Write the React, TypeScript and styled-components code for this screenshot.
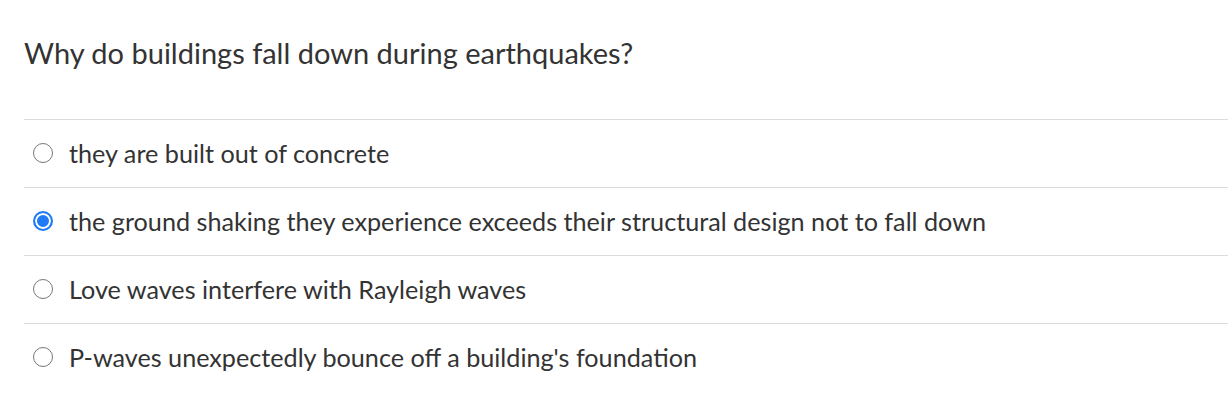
import React, { useState } from 'react'
import styled, { createGlobalStyle } from 'styled-components'

const GlobalStyle = createGlobalStyle`
  html, body {
    margin: 0;
    padding: 0;
    background: #fff;
  }
  body {
    font-family: Lato, "Liberation Sans", sans-serif;
    color: #333;
  }
`

const answers = [
  'they are built out of concrete',
  'the ground shaking they experience exceeds their structural design not to fall down',
  'Love waves interfere with Rayleigh waves',
  "P-waves unexpectedly bounce off a building's foundation",
]

const App = () => {
  const [picked, setPicked] = useState(1)

  return (
    <>
      <GlobalStyle />
      <Question>
        <Title>Why do buildings fall down during earthquakes?</Title>
        <AnswerList>
          {answers.map((text, index) => (
            <Answer key={index} onClick={() => setPicked(index)}>
              <Radio checked={picked === index} />
              <AnswerText>{text}</AnswerText>
            </Answer>
          ))}
        </AnswerList>
      </Question>
    </>
  )
}

export default App

const Question = styled.div`
  padding: 35px 0 0 24px;
`

const Title = styled.h2`
  margin: 0;
  font-size: 29px;
  font-weight: 400;
  line-height: 36px;
  color: #333;
`

const AnswerList = styled.div`
  margin-top: 48px;
`

const Answer = styled.label`
  box-sizing: border-box;
  display: flex;
  align-items: center;
  gap: 16px;
  height: 68px;
  padding: 0 0 2px 9px;
  border-top: 1px solid #dcdcdc;
  font-size: 25.2px;
  color: #333;
  cursor: pointer;
`

const AnswerText = styled.span`
  line-height: 30px;
`

const Radio = styled.span<{ checked: boolean }>`
  box-sizing: border-box;
  flex: none;
  width: 20px;
  height: 20px;
  border-radius: 50%;
  border: ${p => (p.checked ? '2px solid #1f7cf6' : '1.5px solid #777')};
  background: ${p => (p.checked ? '#1f7cf6' : '#fff')};
  box-shadow: ${p => (p.checked ? 'inset 0 0 0 2px #fff' : 'none')};
`
